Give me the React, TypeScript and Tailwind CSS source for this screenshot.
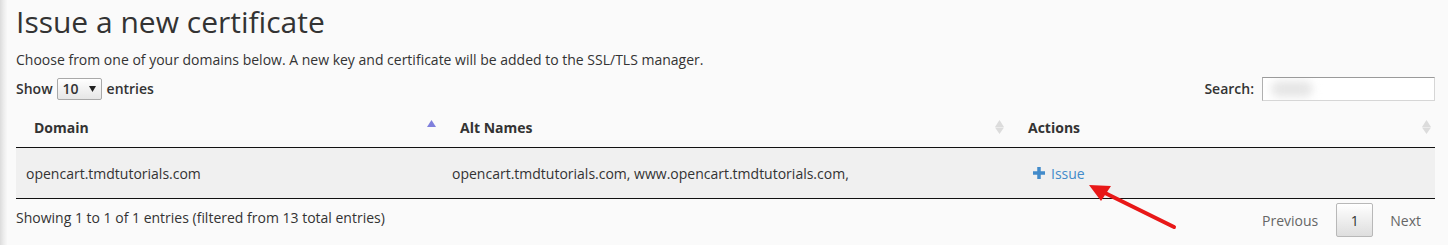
import React from "react";

function SortBoth({ active }: { active?: boolean }) {
  return (
    <svg width="9" height="14" viewBox="0 0 9 14" className="block">
      <polygon points="4.5,0 9,7 0,7" fill={active ? "#7f7fdc" : "#dcdcdc"} />
      {!active && <polygon points="0,7.5 9,7.5 4.5,14" fill="#dcdcdc" />}
    </svg>
  );
}

export default function App() {
  return (
    <div
      className="relative flex w-full h-[245px] bg-[#fafafa] text-[#333] overflow-hidden"
      style={{ fontFamily: "'Open Sans', 'Noto Sans', sans-serif" }}
    >
      <div className="w-[7px] shrink-0 bg-gradient-to-r from-[#dcdcdc] via-[#ececec] to-[#f8f8f8]" />
      <div className="flex-1 pl-[9px] pr-[13px]">
        <h1 className="mt-[5px] text-[30px] leading-[33px] font-normal text-[#333]">
          Issue a new certificate
        </h1>
        <p className="mt-[12px] text-[14px] leading-[20px]">
          Choose from one of your domains below. A new key and certificate will be added to the SSL/TLS manager.
        </p>
        <div className="mt-[7px] h-[24px] flex items-center justify-between text-[14px] leading-[20px]">
          <div className="flex items-center font-semibold">
            <span>Show</span>
            <div className="ml-[4px] mr-[5px] w-[45px] h-[22px] border border-[#a9a9a9] rounded-[2px] bg-gradient-to-b from-[#ffffff] to-[#e6e6e6] flex items-center justify-between pl-[5px] pr-[5px] font-normal">
              <span className="font-semibold">10</span>
              <svg width="7" height="6" viewBox="0 0 7 6">
                <polygon points="0,0 7,0 3.5,6" fill="#222" />
              </svg>
            </div>
            <span>entries</span>
          </div>
          <div className="flex items-center font-semibold">
            <span>Search:</span>
            <div className="ml-[8px] w-[173px] h-[24px] bg-white border border-[#d6d6d6] border-t-[#9a9a9a] border-l-[#b0b0b0] relative overflow-hidden">
              <div className="absolute left-[8px] top-[3px] w-[42px] h-[16px] rounded-full bg-[#e6e6e6] blur-[4px]" />
            </div>
          </div>
        </div>

        <div className="mt-[6px] grid grid-cols-[426px_568px_425px] h-[41px] border-b border-[#111] text-[14px] font-bold">
          <div className="flex items-center justify-between pl-[18px] pr-[6px]">
            <span>Domain</span>
            <SortBoth active />
          </div>
          <div className="flex items-center justify-between pl-[18px] pr-[6px]">
            <span>Alt Names</span>
            <SortBoth />
          </div>
          <div className="flex items-center justify-between pl-[18px] pr-[4px]">
            <span>Actions</span>
            <SortBoth />
          </div>
        </div>

        <div className="grid grid-cols-[426px_568px_425px] h-[51px] border-b border-[#111] bg-[#f0f0f0] text-[14px]">
          <div className="flex items-center pl-[10px]">opencart.tmdtutorials.com</div>
          <div className="flex items-center pl-[10px]">
            opencart.tmdtutorials.com, www.opencart.tmdtutorials.com,
          </div>
          <div className="flex items-center pl-[23px]">
            <span className="flex items-center text-[#428bca]">
              <svg width="12" height="12" viewBox="0 0 12 12" className="mr-[6px]">
                <rect x="4.25" y="0" width="3.5" height="12" fill="#428bca" />
                <rect x="0" y="4.25" width="12" height="3.5" fill="#428bca" />
              </svg>
              Issue
            </span>
          </div>
        </div>

        <div className="flex justify-between items-start pt-[4px] text-[14px]">
          <div className="mt-[5px] leading-[20px]">
            Showing 1 to 1 of 1 entries (filtered from 13 total entries)
          </div>
          <div className="flex items-center h-[34px] text-[#666]">
            <span className="mr-[18px]">Previous</span>
            <div className="w-[37px] h-[34px] border border-[#b8b8b8] rounded-[2px] bg-gradient-to-b from-[#ffffff] to-[#dedede] flex items-center justify-center text-[#333]">
              1
            </div>
            <span className="ml-[17px] mr-[14px]">Next</span>
          </div>
        </div>
      </div>

      <svg className="absolute left-0 top-0 pointer-events-none" width="1448" height="245">
        <line x1="1103" y1="192" x2="1174" y2="227" stroke="#e81818" strokeWidth="4" strokeLinecap="round" />
        <polygon points="1089,185 1111,186 1101,201" fill="#e81818" />
      </svg>
    </div>
  );
}
